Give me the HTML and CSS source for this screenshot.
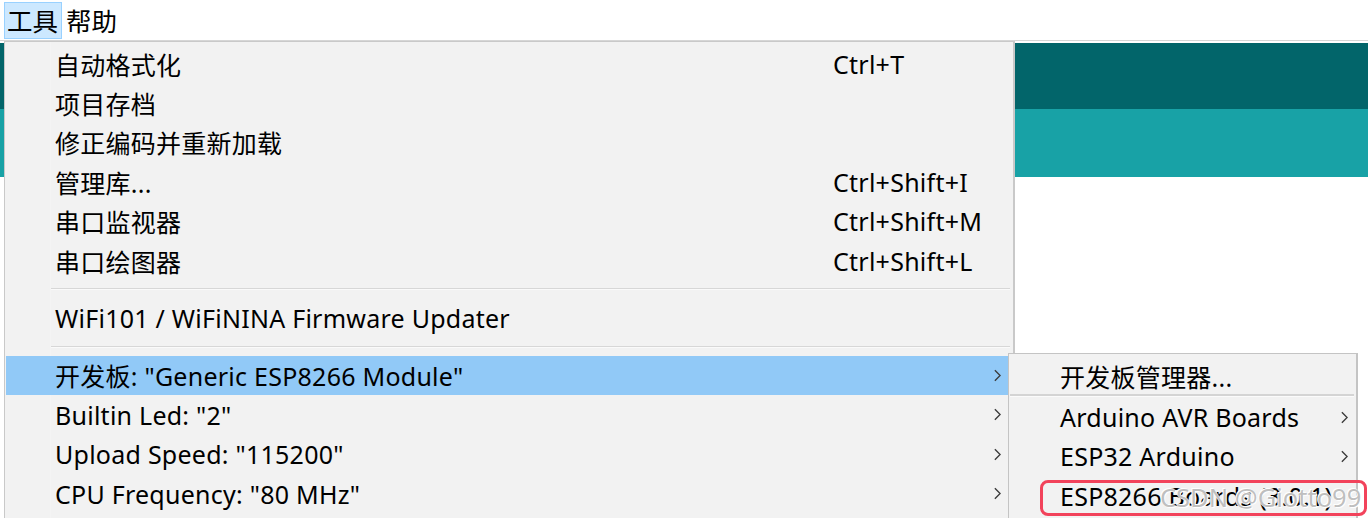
FILE: index.html
```html
<!DOCTYPE html>
<html lang="zh-CN">
<head>
<meta charset="utf-8">
<title>工具菜单</title>
<link rel="stylesheet" href="styles.css">
</head>
<body>
<div class="app">
  <div class="menubar">
    <span class="mb-item active">工具</span>
    <span class="mb-item">帮助</span>
  </div>
  <div class="band band-dark"></div>
  <div class="band band-light"></div>

  <div class="menu">
    <div class="row"><span class="label">自动格式化</span><span class="key">Ctrl+T</span></div>
    <div class="row"><span class="label">项目存档</span></div>
    <div class="row"><span class="label">修正编码并重新加载</span></div>
    <div class="row"><span class="label">管理库...</span><span class="key">Ctrl+Shift+I</span></div>
    <div class="row"><span class="label">串口监视器</span><span class="key">Ctrl+Shift+M</span></div>
    <div class="row"><span class="label">串口绘图器</span><span class="key">Ctrl+Shift+L</span></div>
    <div class="sep"></div>
    <div class="row"><span class="label">WiFi101 / WiFiNINA Firmware Updater</span></div>
    <div class="sep"></div>
    <div class="row hl"><span class="label">开发板: "Generic ESP8266 Module"</span><svg class="arrow" viewBox="0 0 8 14"><path d="M1 1 L7 7 L1 13"/></svg></div>
    <div class="row"><span class="label">Builtin Led: "2"</span><svg class="arrow" viewBox="0 0 8 14"><path d="M1 1 L7 7 L1 13"/></svg></div>
    <div class="row"><span class="label">Upload Speed: "115200"</span><svg class="arrow" viewBox="0 0 8 14"><path d="M1 1 L7 7 L1 13"/></svg></div>
    <div class="row"><span class="label">CPU Frequency: "80 MHz"</span><svg class="arrow" viewBox="0 0 8 14"><path d="M1 1 L7 7 L1 13"/></svg></div>
  </div>

  <div class="submenu">
    <div class="srow"><span class="label">开发板管理器...</span></div>
    <div class="ssep"></div>
    <div class="srow"><span class="label">Arduino AVR Boards</span><svg class="arrow" viewBox="0 0 8 14"><path d="M1 1 L7 7 L1 13"/></svg></div>
    <div class="srow"><span class="label">ESP32 Arduino</span><svg class="arrow" viewBox="0 0 8 14"><path d="M1 1 L7 7 L1 13"/></svg></div>
    <div class="srow"><span class="label">ESP8266 Boards (3.0.1)</span></div>
  </div>

  <div class="redbox"></div>
  <div class="watermark">CSDN @Giotto99</div>
</div>
</body>
</html>
```

FILE: styles.css
```css
html, body {
  margin: 0;
  padding: 0;
  background: #ffffff;
  overflow: hidden;
}
.app {
  position: relative;
  width: 1368px;
  height: 518px;
  overflow: hidden;
  font-family: "Noto Sans", "Noto Sans CJK SC", sans-serif;
  color: #000;
}
.menubar {
  display: flex;
  align-items: stretch;
  height: 41px;
  border-bottom: 1px solid #d6d6d6;
  box-sizing: border-box;
  padding: 2px 0 1px 4px;
  gap: 1px;
  font-size: 25.5px;
  line-height: 36px;
}
.mb-item {
  padding: 0 3px 0 2px;
  border: 1px solid transparent;
}
.mb-item.active {
  background: #cce8ff;
  border-color: #99d1ff;
}
.band {
  position: absolute;
  left: 0;
  right: 0;
}
.band-dark { top: 43px; height: 66px; background: #02656a; }
.band-light { top: 109px; height: 68px; background: #18a2a6; }

.menu {
  position: absolute;
  left: 4px;
  top: 41px;
  width: 1011px;
  height: 490px;
  box-sizing: border-box;
  background: #f2f2f2;
  border: 1px solid #c9c9c9;
  border-right-width: 2px;
  padding: 2px 3px 0 1px;
  font-size: 25px;
  letter-spacing: 0.25px;
}
.menu::before {
  content: "";
  position: absolute;
  left: 45px;
  top: 0;
  bottom: 0;
  width: 1px;
  background: #f4f4f4;
}
.row {
  position: relative;
  display: grid;
  grid-template-columns: 49px 778px 1fr 16px;
  align-items: center;
  height: 39.4px;
}
.row .label { grid-column: 2; white-space: nowrap; }
.row .key { grid-column: 3; white-space: nowrap; }
.row .arrow { grid-column: 4; }
.row.hl { background: #91c9f7; }
.sep {
  height: 18px;
  margin-left: 45px;
  display: flex;
  align-items: center;
}
.sep::after {
  content: "";
  flex: 1;
  height: 1px;
  background: #d7d7d7;
  border-bottom: 1px solid #fafafa;
}
.arrow {
  width: 7px;
  height: 13px;
  fill: none;
  stroke: #3a3a3a;
  stroke-width: 1.6;
}

.submenu {
  position: absolute;
  left: 1008px;
  top: 353px;
  width: 350px;
  height: 200px;
  box-sizing: border-box;
  background: #f2f2f2;
  border: 1px solid #c4c4c4;
  border-right-width: 2px;
  padding: 2px 2px 0 1px;
  font-size: 25px;
  letter-spacing: 0.25px;
}
.srow {
  display: grid;
  grid-template-columns: 50px 1fr 13px;
  align-items: center;
  height: 39.4px;
}
.srow .label { grid-column: 2; white-space: nowrap; }
.srow .arrow { grid-column: 3; }
.ssep {
  height: 2px;
  background: #d4d4d4;
  border-bottom: 1px solid #fbfbfb;
  margin: -1px 0 0 0;
}

.redbox {
  position: absolute;
  left: 1040px;
  top: 480px;
  width: 327px;
  height: 36px;
  box-sizing: border-box;
  border: 3px solid #f2435b;
  border-radius: 8px;
}
.watermark {
  position: absolute;
  left: 1160px;
  top: 480px;
  font-family: "Noto Sans", sans-serif;
  font-size: 25.5px;
  line-height: 34px;
  color: rgba(170, 170, 170, 0.75);
  text-shadow: 0 0 1px #fff, 1px 1px 0 #fff, -1px -1px 0 #fff;
  white-space: nowrap;
}
```
